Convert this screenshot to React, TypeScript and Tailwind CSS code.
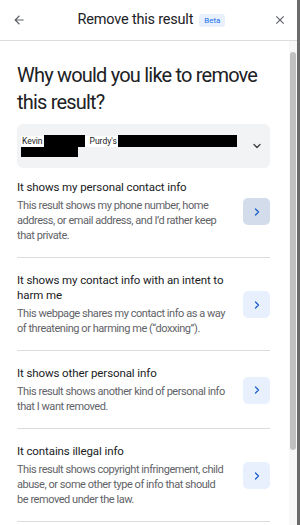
import { ChevronDown, ChevronRight } from "lucide-react";

const items = [
  {
    title: "It shows my personal contact info",
    desc: "This result shows my phone number, home address, or email address, and I’d rather keep that private.",
    active: true,
  },
  {
    title: "It shows my contact info with an intent to harm me",
    desc: "This webpage shares my contact info as a way of threatening or harming me (“doxxing”).",
  },
  {
    title: "It shows other personal info",
    desc: "This result shows another kind of personal info that I want removed.",
  },
  {
    title: "It contains illegal info",
    desc: "This result shows copyright infringement, child abuse, or some other type of info that should be removed under the law.",
    narrow: true,
  },
];

export default function App() {
  return (
    <div
      className="flex w-[300px] h-[525px] overflow-hidden bg-white text-[#202124]"
      style={{ fontFamily: "Roboto, 'Liberation Sans', sans-serif" }}
    >
      <div className="flex flex-col w-[297px] h-full">
        {/* header */}
        <div className="flex items-center h-[41px] shrink-0 border-b border-[#dadce0] pl-[12px] pr-[10px]">
          <svg width="14" height="14" viewBox="0 0 24 24" className="text-[#5f6368]">
            <path d="M20 11H7.83l5.59-5.59L12 4l-8 8 8 8 1.41-1.41L7.83 13H20v-2z" fill="currentColor" />
          </svg>
          <div className="flex-1 flex items-center justify-center gap-[6px] pl-[4px]">
            <span className="text-[14.5px] tracking-[-0.2px] text-[#202124]">Remove this result</span>
            <span className="text-[8px] text-[#1a73e8] bg-[#e8f0fe] rounded-[3px] px-[5px] h-[13px] leading-[13px]">
              Beta
            </span>
          </div>
          <svg width="14" height="14" viewBox="0 0 24 24" className="text-[#5f6368]">
            <path
              d="M19 6.41L17.59 5 12 10.59 6.41 5 5 6.41 10.59 12 5 17.59 6.41 19 12 13.41 17.59 19 19 17.59 13.41 12z"
              fill="currentColor"
            />
          </svg>
        </div>

        {/* body */}
        <div className="flex flex-1 min-h-0">
          <div className="flex-1 overflow-hidden pl-[17px] pr-[19px] pt-[21px]">
            <h1 className="text-[20px] leading-[27px] tracking-[-0.8px] text-[#202124]">
              Why would you like to remove this result?
            </h1>

            <div className="mt-[8px] h-[44px] bg-[#f1f3f4] rounded-[6px] flex items-center pl-[4px] pr-[7px]">
              <div className="flex-1 flex flex-col text-[8.5px] leading-[11px] text-[#202124]">
                <div className="flex items-center">
                  <span className="bg-white px-[1px]">Kevin</span>
                  <span className="bg-black w-[41px] h-[12px]" />
                  <span className="bg-white pl-[5px] pr-[1px]">Purdy's</span>
                  <span className="bg-black w-[119px] h-[12px]" />
                </div>
                <span className="bg-black w-[57px] h-[10px]" />
              </div>
              <ChevronDown size={12} strokeWidth={2.5} className="text-[#3c4043]" />
            </div>

            <div className="-mt-[3px] flex flex-col">
              {items.map((it, i) => (
                <div key={i} className="flex items-center border-b border-[#dadce0] pt-[15px] pb-[14px]">
                  <div className="flex-1 pr-[12px]">
                    <p className="text-[11.5px] leading-[15px] tracking-[-0.1px] text-[#202124]">{it.title}</p>
                    <p
                      className={
                        "mt-[3px] text-[11px] leading-[15px] tracking-[-0.45px] text-[#5f6368] " +
                        (it.narrow ? "max-w-[210px]" : "max-w-[213px]")
                      }
                    >
                      {it.desc}
                    </p>
                  </div>
                  <div
                    className={
                      "w-[27px] h-[27px] rounded-[5px] flex items-center justify-center shrink-0 " +
                      (it.active ? "bg-[#d3dcea]" : "bg-[#e8f0fe]")
                    }
                  >
                    <ChevronRight size={12} strokeWidth={2.5} className="text-[#1a5fc8]" />
                  </div>
                </div>
              ))}
            </div>
          </div>

          {/* scrollbar */}
          <div className="w-[8px] shrink-0 bg-[#f8f8f8] pt-[11px] flex justify-center">
            <div className="w-[6px] h-[398px] rounded-[3px] bg-[#c1c1c1]" />
          </div>
        </div>
      </div>
      <div className="w-[3px] h-full bg-[#6b6b6b]" />
    </div>
  );
}
